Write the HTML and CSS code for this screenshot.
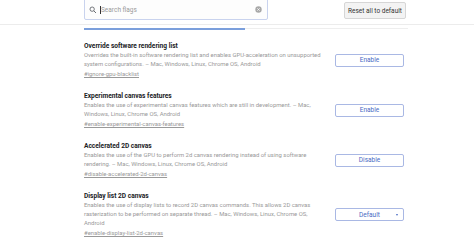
FILE: index.html
```html
<!DOCTYPE html>
<html lang="en">

<head>
    <meta charset="UTF-8">
    <title>Experiments</title>
    <link rel="stylesheet" href="styles.css">
</head>

<body>
    <!-- Header -->
    <div class="header">
        <div class="header-inner">
            <div class="search">
                <svg class="search-icon" width="8" height="8" viewBox="0 0 24 24">
                    <circle cx="9.5" cy="9.5" r="6.5" fill="none" stroke="#5f6368" stroke-width="2.6"/>
                    <line x1="14.5" y1="14.5" x2="21" y2="21" stroke="#5f6368" stroke-width="2.8"/>
                </svg>
                <span class="caret"></span>
                <span class="placeholder">Search flags</span>
                <svg class="clear-icon" width="7" height="7" viewBox="0 0 24 24">
                    <circle cx="12" cy="12" r="11" fill="#a8a8a8"/>
                    <path d="M8 8l8 8M16 8l-8 8" stroke="#fff" stroke-width="2.6"/>
                </svg>
            </div>
            <button class="reset-btn">Reset all to default</button>
        </div>
    </div>

    <div class="content">
        <!-- Tabs -->
        <div class="tabs">
            <div class="tab active"></div>
            <div class="tab"></div>
        </div>

        <!-- Experiments -->
        <div class="experiment">
            <div class="info">
                <h3>Override software rendering list</h3>
                <p>Overrides the built-in software rendering list and enables GPU-acceleration on unsupported system configurations. &ndash; Mac, Windows, Linux, Chrome OS, Android</p>
                <a href="#">#ignore-gpu-blacklist</a>
            </div>
            <button class="action">Enable</button>
        </div>

        <div class="experiment">
            <div class="info">
                <h3>Experimental canvas features</h3>
                <p>Enables the use of experimental canvas features which are still in development. &ndash; Mac, Windows, Linux, Chrome OS, Android</p>
                <a href="#">#enable-experimental-canvas-features</a>
            </div>
            <button class="action">Enable</button>
        </div>

        <div class="experiment">
            <div class="info">
                <h3>Accelerated 2D canvas</h3>
                <p>Enables the use of the GPU to perform 2d canvas rendering instead of using software rendering. &ndash; Mac, Windows, Linux, Chrome OS, Android</p>
                <a href="#">#disable-accelerated-2d-canvas</a>
            </div>
            <button class="action">Disable</button>
        </div>

        <div class="experiment">
            <div class="info">
                <h3>Display list 2D canvas</h3>
                <p>Enables the use of display lists to record 2D canvas commands. This allows 2D canvas rasterization to be performed on separate thread. &ndash; Mac, Windows, Linux, Chrome OS, Android</p>
                <a href="#">#enable-display-list-2d-canvas</a>
            </div>
            <div class="action select">Default <span class="arrow"></span></div>
        </div>
    </div>
</body>

</html>
```

FILE: styles.css
```css
body, html {
    margin: 0;
    font-family: Roboto, 'Liberation Sans', sans-serif;
    background-color: #ffffff;
}

/* Header */
.header {
    height: 24px;
    border-bottom: 1px solid #ececec;
}

.header-inner {
    display: flex;
    align-items: flex-start;
    margin-left: 84px;
    width: 322px;
}

.search {
    display: flex;
    align-items: center;
    width: 182px;
    height: 19px;
    margin-top: -1px;
    border: 1px solid #c9d3ee;
    border-radius: 0 0 2px 2px;
    background-color: #fdfdfd;
}

.search-icon {
    margin-left: 4px;
}

.caret {
    width: 1px;
    height: 8px;
    background-color: #333;
    margin-left: 3px;
}

.placeholder {
    font-size: 6.5px;
    color: #9a9a9a;
    flex: 1;
}

.clear-icon {
    margin-right: 5px;
}

.reset-btn {
    margin-left: auto;
    margin-top: 2px;
    height: 17px;
    width: 62px;
    padding: 0;
    font-family: Roboto, 'Liberation Sans', sans-serif;
    font-size: 6.5px;
    color: #333;
    background-color: #f3f3f3;
    border: 1px solid #d6d6d6;
    border-radius: 2px;
}

/* Content */
.content {
    margin-left: 84px;
    width: 324px;
}

.tabs {
    display: flex;
    margin-top: 3px;
    margin-bottom: 11px;
}

.tab {
    flex: 1;
    height: 1px;
    background-color: #eeeeee;
}

.tab.active {
    flex: 0 0 161px;
    height: 2px;
    background-color: #7b9fdc;
}

.experiment {
    display: flex;
    align-items: center;
    margin-bottom: 12px;
}

.info {
    display: flex;
    flex-direction: column;
    align-items: flex-start;
    width: 242px;
}

.info h3 {
    margin: 0;
    font-size: 6.6px;
    line-height: 10px;
    font-weight: bold;
    color: #202124;
}

.info p {
    margin: 0;
    font-size: 5.9px;
    line-height: 9px;
    color: #999999;
}

.info a {
    margin-top: 1px;
    font-size: 5.9px;
    line-height: 9px;
    color: #999999;
}

.action {
    margin-left: auto;
    margin-right: 4px;
    width: 69px;
    height: 13px;
    padding: 0;
    font-family: Roboto, 'Liberation Sans', sans-serif;
    font-size: 6.5px;
    color: #4a6bc4;
    background-color: #fff;
    border: 1px solid #a9b8e4;
    border-radius: 2px;
    box-sizing: border-box;
}

.select {
    display: flex;
    align-items: center;
    justify-content: center;
    position: relative;
}

.arrow {
    position: absolute;
    right: 5px;
    top: 5px;
    width: 0;
    height: 0;
    border-left: 1.5px solid transparent;
    border-right: 1.5px solid transparent;
    border-top: 2px solid #4a6bc4;
}
```
